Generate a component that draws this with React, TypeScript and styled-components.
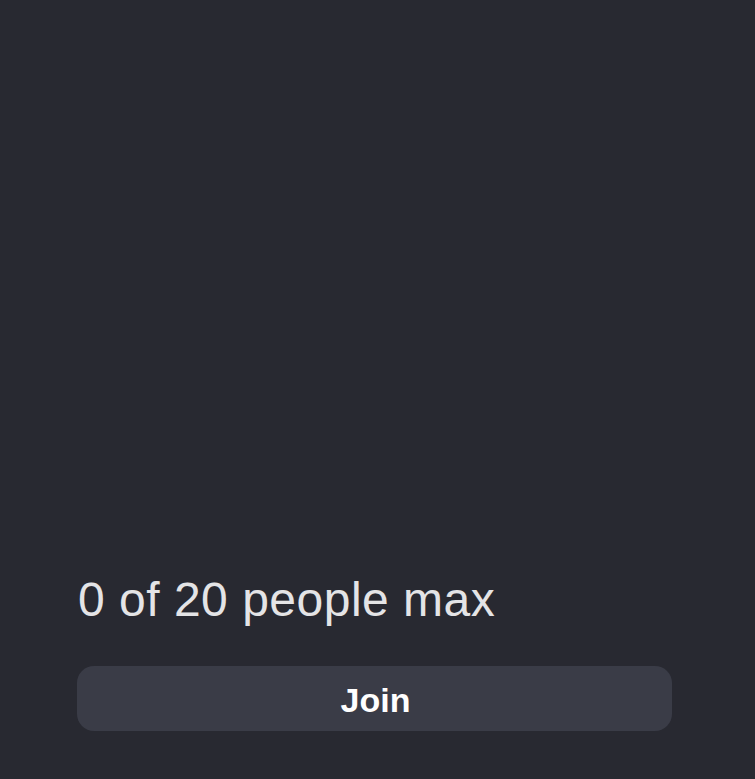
import styled, {createGlobalStyle} from 'styled-components'
import {FunctionComponent} from 'react'

const GlobalStyle = createGlobalStyle`
  html, body {
    margin: 0;
    padding: 0;
    height: 100%;
    background-color: #282931;
  }
  #root {
    height: 100%;
  }
`

const Page = styled.div`
  box-sizing: border-box;
  height: 100%;
  display: flex;
  flex-direction: column;
  justify-content: flex-end;
  padding: 0 83px 48px 77px;
  background-color: #282931;
  font-family: "Liberation Sans", Arial, sans-serif;
`

const Capacity = styled.div`
  font-size: 48px;
  line-height: 56px;
  letter-spacing: 0.5px;
  color: #e4e4e6;
  margin: 0 0 38px 1px;
`

const JoinButton = styled.button`
  height: 65px;
  width: 100%;
  border: none;
  border-radius: 17px;
  background-color: #3a3c47;
  color: #ffffff;
  font-family: "Liberation Sans", Arial, sans-serif;
  font-weight: bold;
  font-size: 34px;
  cursor: pointer;
  padding: 4px 0 0 2px;
`

interface RoomProps {
    count: number
    max: number
}

const Room: FunctionComponent<RoomProps> = ({count, max}) => {
    return (
        <Page>
            <Capacity>
                {count} of {max} people max
            </Capacity>
            <JoinButton>Join</JoinButton>
        </Page>
    )
}

const App = () => {
    return (
        <>
            <GlobalStyle/>
            <Room count={0} max={20}/>
        </>
    )
}

export default App
